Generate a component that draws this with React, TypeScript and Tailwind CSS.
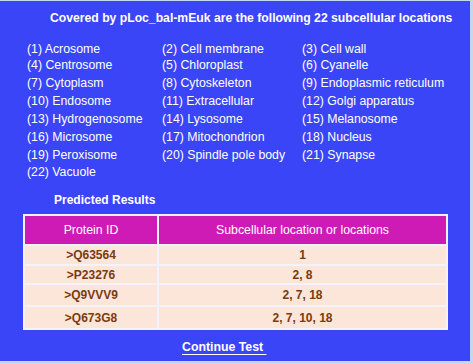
import React from "react";

const items: string[][] = [
  ["(1) Acrosome", "(2) Cell membrane", "(3) Cell wall"],
  ["(4) Centrosome", "(5) Chloroplast", "(6) Cyanelle"],
  ["(7) Cytoplasm", "(8) Cytoskeleton", "(9) Endoplasmic reticulum"],
  ["(10) Endosome", "(11) Extracellular", "(12) Golgi apparatus"],
  ["(13) Hydrogenosome", "(14) Lysosome", "(15) Melanosome"],
  ["(16) Microsome", "(17) Mitochondrion", "(18) Nucleus"],
  ["(19) Peroxisome", "(20) Spindle pole body", "(21) Synapse"],
  ["(22) Vacuole", "", ""],
];

const rowH = ["h-[14px]", "h-[18px]", "h-[18px]", "h-[18px]", "h-[18px]", "h-[18px]", "h-[18px]", "h-[16px]"];

const results: [string, string, string][] = [
  [">Q63564", "1", "h-[18px]"],
  [">P23276", "2, 8", "h-[17px]"],
  [">Q9VVV9", "2, 7, 18", "h-[20px]"],
  [">Q673G8", "2, 7, 10, 18", "h-[21px]"],
];

export default function App() {
  return (
    <div
      className="w-[473px] h-[364px] bg-[#c7d5ef] pt-px overflow-hidden"
      style={{ fontFamily: '"Liberation Sans", Arial, sans-serif' }}
    >
      <div className="w-[470px] h-[360px] bg-[#3b45f8] pt-[10px] text-white">
        <div className="pl-[50px] text-[12.2px] leading-[14px] font-bold whitespace-nowrap">
          Covered by pLoc_bal-mEuk are the following 22 subcellular locations
        </div>
        <div className="mt-[17px] flex flex-col text-[12.3px]">
          {items.map((row, i) => (
            <div key={i} className={`flex items-center ${rowH[i]} pl-[27px]`}>
              <div className="w-[135px] whitespace-nowrap">{row[0]}</div>
              <div className="w-[140px] whitespace-nowrap">{row[1]}</div>
              <div className="whitespace-nowrap">{row[2]}</div>
            </div>
          ))}
        </div>
        <div className="mt-[13px] pl-[54px] text-[12px] leading-[14px] font-bold">
          Predicted Results
        </div>
        <div className="mt-[7px] ml-[23px] w-[425px] bg-[#f4f2fb] p-[2px] flex flex-col gap-[2px]">
          <div className="flex gap-[2px] h-[28px] text-[12.3px]">
            <div className="w-[132px] bg-[#cf1bb6] flex items-center justify-center">Protein ID</div>
            <div className="flex-1 bg-[#cf1bb6] flex items-center justify-center">
              Subcellular location or locations
            </div>
          </div>
          {results.map(([id, loc, h]) => (
            <div key={id} className={`flex gap-[2px] ${h} text-[12px] font-bold text-[#7a3a10]`}>
              <div className="w-[132px] bg-[#fbe6d9] flex items-center justify-center">{id}</div>
              <div className="flex-1 bg-[#fbe6d9] flex items-center justify-center">{loc}</div>
            </div>
          ))}
        </div>
        <div className="mt-[10px] pl-[182px] text-[12.3px] leading-[14px] font-bold">
          <span className="underline underline-offset-[3px] whitespace-pre">Continue Test </span>
        </div>
      </div>
    </div>
  );
}
